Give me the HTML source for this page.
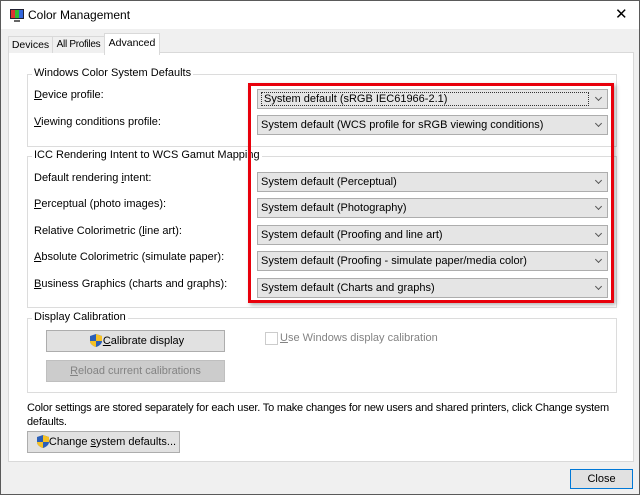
<!DOCTYPE html><html><head><style>
body{margin:0;width:640px;height:495px;overflow:hidden;font-family:"Liberation Sans",sans-serif;font-size:11px;color:#000}
.win{position:absolute;left:0;top:0;width:638px;height:493px;border:1px solid #5a5a5a;background:#f0f0f0}
.title{position:absolute;left:0;top:0;width:638px;height:28px;background:#fff}
.a{position:absolute;white-space:nowrap}
.panel{position:absolute;left:7px;top:51px;width:624px;height:408px;background:#fff;border:1px solid #d9d9d9}
.grp{position:absolute;border:1px solid #dcdcdc}
.gl{position:absolute;background:#fff;padding:0 2px}
.dd{position:absolute;left:256px;width:349px;height:18px;background:#e5e5e5;border:1px solid #adadad;line-height:18px;text-indent:3px}
.dd:after{content:"";position:absolute;right:6px;top:5px;width:4px;height:4px;border-right:1px solid #555;border-bottom:1px solid #555;transform:rotate(45deg)}
.btn{position:absolute;background:#e1e1e1;border:1px solid #adadad;text-align:center;line-height:20px}
u{text-decoration:underline}
</style></head><body><div class="win">
<div class="title"></div>
<svg class="a" style="left:8px;top:7px" width="16" height="15"><rect x="1" y="1" width="14" height="10" fill="#223"/><rect x="2" y="2" width="4" height="8" fill="#d33"/><rect x="6" y="2" width="4" height="8" fill="#3b3"/><rect x="10" y="2" width="4" height="8" fill="#36d"/><rect x="5" y="12" width="6" height="2" fill="#666"/></svg>
<div class="a" style="left:27px;top:7px;font-size:12px">Color Management</div>
<div class="a" style="left:614px;top:4px;font-size:15px">✕</div>
<div class="panel"></div>
<div class="a" style="left:7px;top:35px;width:43px;height:16px;border:1px solid #d9d9d9;border-bottom:none;background:#f0f0f0;text-align:center;line-height:16px;font-size:10.5px">Devices</div>
<div class="a" style="left:51px;top:35px;width:51px;height:16px;border:1px solid #d9d9d9;border-bottom:none;background:#f0f0f0;text-align:center;line-height:16px;font-size:10px;letter-spacing:-0.3px">All Profiles</div>
<div class="a" style="left:103px;top:32px;width:54px;height:21px;border:1px solid #d9d9d9;border-bottom:none;background:#fff;text-align:center;line-height:18px;font-size:10.5px">Advanced</div>
<div class="grp" style="left:26px;top:73px;width:588px;height:71px"></div>
<div class="gl" style="left:31px;top:66px">Windows Color System Defaults</div>
<div class="grp" style="left:26px;top:155px;width:588px;height:150px"></div>
<div class="gl" style="left:31px;top:148px">ICC Rendering Intent to WCS Gamut Mapping</div>
<div class="grp" style="left:26px;top:317px;width:588px;height:73px"></div>
<div class="gl" style="left:31px;top:310px">Display Calibration</div>
<div class="a" style="left:33px;top:88px"><u>D</u>evice profile:</div>
<div class="a" style="left:33px;top:115px"><u>V</u>iewing conditions profile:</div>
<div class="a" style="left:33px;top:171px">Default rendering <u>i</u>ntent:</div>
<div class="a" style="left:33px;top:197px"><u>P</u>erceptual (photo images):</div>
<div class="a" style="left:33px;top:224px">Relative Colorimetric (<u>l</u>ine art):</div>
<div class="a" style="left:33px;top:250px"><u>A</u>bsolute Colorimetric (simulate paper):</div>
<div class="a" style="left:33px;top:277px"><u>B</u>usiness Graphics (charts and graphs):</div>
<div class="a" style="left:247px;top:82px;width:360px;height:214px;border:3px solid #e8000b;box-shadow:2px 2px 4px rgba(0,0,0,.3)"></div>
<div class="dd" style="top:88px"><span style="outline:1px dotted #333;outline-offset:-1px;display:inline-block;width:328px;height:14px;line-height:14px;margin-top:1px">System default (sRGB IEC61966-2.1)</span></div>
<div class="dd" style="top:114px">System default (WCS profile for sRGB viewing conditions)</div>
<div class="dd" style="top:171px">System default (Perceptual)</div>
<div class="dd" style="top:197px">System default (Photography)</div>
<div class="dd" style="top:224px">System default (Proofing and line art)</div>
<div class="dd" style="top:250px">System default (Proofing - simulate paper/media color)</div>
<div class="dd" style="top:277px">System default (Charts and graphs)</div>
<div class="btn" style="left:45px;top:329px;width:177px"><span style="padding-left:16px"><u>C</u>alibrate display</span></div>
<svg class="a" style="left:88px;top:332px" width="14" height="15"><path d="M7 1L1 3V8C1 11 4 13 7 14C10 13 13 11 13 8V3Z" fill="#2b5fb8"/><path d="M7 1L13 3V8H7ZM7 8V14C4 13 1 11 1 8Z" fill="#f5c125"/></svg>
<div class="btn" style="left:45px;top:359px;width:177px;background:#ccc;border-color:#bfbfbf;color:#838383"><u>R</u>eload current calibrations</div>
<div class="a" style="left:264px;top:331px;width:11px;height:11px;border:1px solid #ccc"></div>
<div class="a" style="left:279px;top:331px;color:#838383"><u>U</u>se Windows display calibration</div>
<div class="a" style="left:26px;top:400px;line-height:14px;white-space:normal;width:592px;font-size:11px;letter-spacing:-0.2px">Color settings are stored separately for each user. To make changes for new users and shared printers, click Change system defaults.</div>
<div class="btn" style="left:26px;top:430px;width:151px"><span style="padding-left:18px">Change <u>s</u>ystem defaults...</span></div>
<svg class="a" style="left:35px;top:433px" width="14" height="15"><path d="M7 1L1 3V8C1 11 4 13 7 14C10 13 13 11 13 8V3Z" fill="#2b5fb8"/><path d="M7 1L13 3V8H7ZM7 8V14C4 13 1 11 1 8Z" fill="#f5c125"/></svg>
<div class="btn" style="left:569px;top:468px;width:61px;height:18px;line-height:18px;border:1px solid #0078d7;background:#e1e1e1">Close</div>
</div></body></html>
